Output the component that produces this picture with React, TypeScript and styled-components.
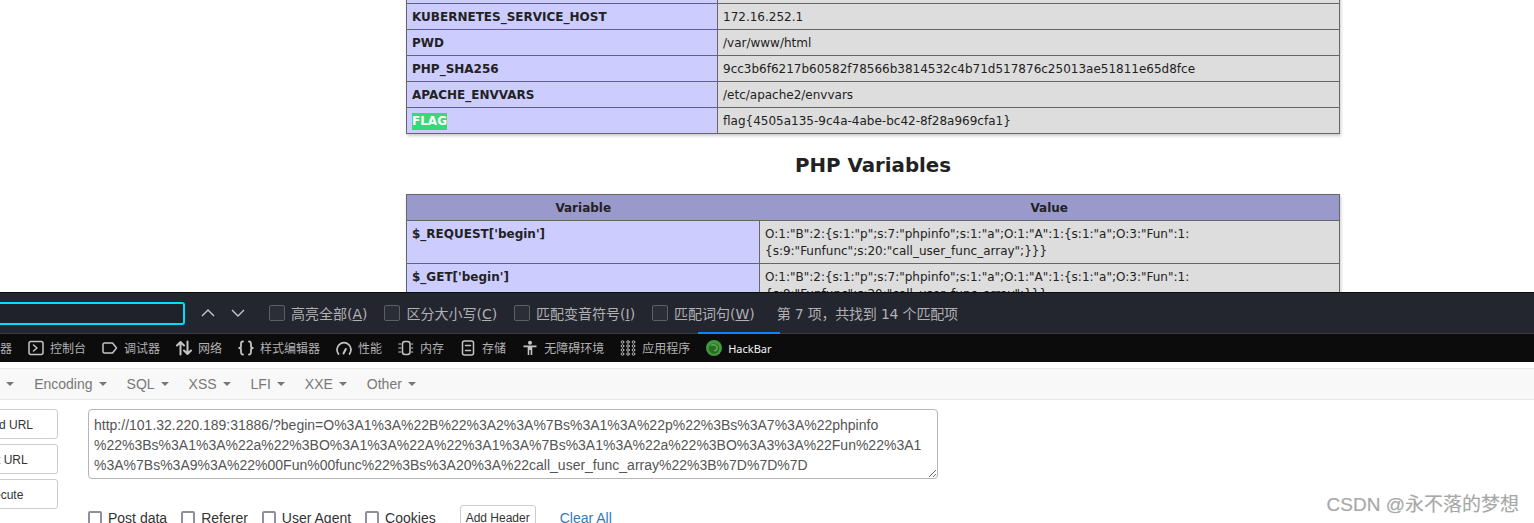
import React from "react";
import styled, { createGlobalStyle } from "styled-components";

const GlobalStyle = createGlobalStyle`
  html, body {
    margin: 0;
    padding: 0;
    background: #fff;
  }
`;

const Screen = styled.div`
  position: relative;
  width: 1534px;
  height: 523px;
  overflow: hidden;
  display: flex;
  flex-direction: column;
`;

/* scrolled phpinfo page */
const PagePane = styled.div`
  height: 292px;
  flex: none;
  overflow: hidden;
  padding-left: 406px;
  font-family: "DejaVu Sans", sans-serif;
  font-size: 12px;
  line-height: 17px;
  color: #222;
`;

const PageColumn = styled.div`
  width: 934px;
  margin-top: -23px;
`;

const InfoTable = styled.table`
  width: 934px;
  table-layout: fixed;
  border-collapse: collapse;
  box-shadow: 1px 2px 3px #ccc;
`;

const NameCell = styled.td<{ $width: number }>`
  width: ${(p) => p.$width}px;
  box-sizing: border-box;
  border: 1px solid #666;
  padding: 5px 5px 3px;
  background: #ccf;
  font-weight: bold;
  vertical-align: top;
`;

const ValueCell = styled.td`
  border: 1px solid #666;
  padding: 5px 5px 3px;
  background: #ddd;
  vertical-align: top;
`;

const HeadCell = styled.th<{ $width?: number }>`
  ${(p) => (p.$width ? `width: ${p.$width}px;` : "")}
  box-sizing: border-box;
  border-top: 1px solid #666;
  border-bottom: 1px solid #666;
  padding: 5px 5px 3px;
  background: #99c;
  font-weight: bold;
  text-align: center;
  &:first-child {
    border-left: 1px solid #666;
  }
  &:last-child {
    border-right: 1px solid #666;
  }
`;

const FoundMark = styled.span`
  display: inline-block;
  background: #38d878;
  color: #fff;
`;

const SectionTitle = styled.h2`
  margin: 18px 0 15px;
  font-size: 19.8px;
  line-height: 27px;
  font-weight: bold;
  text-align: center;
  color: #222;
`;

/* find bar */
const FindBar = styled.div`
  height: 40px;
  flex: none;
  display: flex;
  align-items: center;
  background: #23252f;
  border-top: 1px solid #0c0c0d;
  font-family: "DejaVu Sans", "Noto Sans CJK SC", sans-serif;
  font-size: 14px;
  color: #b1b1b3;
`;

const FindInput = styled.div`
  width: 200px;
  height: 23px;
  margin-left: -15px;
  margin-right: 15px;
  flex: none;
  box-sizing: border-box;
  border: 2px solid #00ddff;
  border-radius: 3px;
  background: #20222b;
`;

const ArrowButton = styled.button`
  width: 16px;
  height: 16px;
  margin-right: 14px;
  padding: 0;
  border: 0;
  background: none;
  color: #c8c8ca;
  display: flex;
`;

const FindOption = styled.label`
  display: flex;
  align-items: center;
  gap: 6px;
  margin-right: 16.9px;
  white-space: nowrap;
  &:first-of-type {
    margin-left: 9px;
  }
`;

const FindCheck = styled.input.attrs({ type: "checkbox" })`
  appearance: none;
  width: 16px;
  height: 16px;
  margin: 0;
  border: 1px solid #5d5f66;
  border-radius: 2px;
  background: #2b2d37;
`;

const MatchStatus = styled.span`
  margin-left: 5px;
  letter-spacing: -0.2px;
  white-space: nowrap;
`;

/* devtools tabs */
const TabBar = styled.div`
  height: 28px;
  flex: none;
  display: flex;
  background: #0c0c0d;
  border-top: 1px solid #3a3b40;
  font-family: "Noto Sans", "Noto Sans CJK SC", sans-serif;
  font-size: 12px;
  color: #b1b1b3;
`;

const Tab = styled.div<{ $active?: boolean }>`
  position: relative;
  display: flex;
  align-items: center;
  gap: 6px;
  padding: 0 8px;
  flex: none;
  white-space: nowrap;
  color: ${(p) => (p.$active ? "#f4f4f5" : "#b1b1b3")};
  font-size: ${(p) => (p.$active ? "11px" : "12px")};
  &:first-child {
    margin-left: -54px;
  }
  ${(p) =>
    p.$active
      ? `&::before {
    content: "";
    position: absolute;
    left: 0;
    right: 0;
    top: -2px;
    height: 2px;
    background: #0a84ff;
  }`
      : ""}
`;

const TabIcon = styled.svg`
  width: 16px;
  height: 16px;
  flex: none;
  fill: none;
  stroke: #c4c4c6;
  stroke-width: 1.5;
  stroke-linecap: round;
  stroke-linejoin: round;
`;

/* hackbar panel */
const HackBar = styled.div`
  flex: 1;
  background: #fff;
  padding-top: 6px;
  font-family: "Liberation Sans", Arial, sans-serif;
  font-size: 14px;
  color: #333;
`;

const MenuRow = styled.div`
  height: 30px;
  display: flex;
  align-items: center;
  background: #f8f8f8;
  border-top: 1px solid #e7e7e7;
  border-bottom: 1px solid #e7e7e7;
`;

const MenuItem = styled.div`
  display: flex;
  align-items: center;
  gap: 6px;
  padding: 0 10px;
  flex: none;
  color: #777;
  &:first-child {
    margin-left: -76px;
  }
`;

const Caret = styled.span`
  width: 0;
  height: 0;
  border-top: 4px solid #777;
  border-left: 4px solid transparent;
  border-right: 4px solid transparent;
`;

const WorkArea = styled.div`
  display: flex;
  gap: 30px;
  margin-left: -47px;
  padding-top: 9px;
`;

const ActionColumn = styled.div`
  width: 105px;
  flex: none;
  display: flex;
  flex-direction: column;
  gap: 5px;
`;

const ActionButton = styled.button<{ $indent: number }>`
  height: 30px;
  padding: 2px 0 0 ${(p) => p.$indent}px;
  text-align: left;
  background: #fff;
  border: 1px solid #ccc;
  border-radius: 3px;
  font-family: inherit;
  font-size: 12px;
  color: #333;
`;

const UrlColumn = styled.div`
  width: 850px;
  flex: none;
`;

const UrlBox = styled.textarea`
  display: block;
  width: 850px;
  height: 70px;
  box-sizing: border-box;
  padding: 5px;
  margin: 0;
  border: 1px solid #b5b5b5;
  border-radius: 4px;
  outline: none;
  overflow: hidden;
  font-family: inherit;
  font-size: 14px;
  line-height: 20px;
  color: #555;
  white-space: pre;
`;

const OptionRow = styled.div`
  display: flex;
  align-items: center;
  margin-top: 26px;
  height: 26px;
`;

const Option = styled.label`
  display: flex;
  align-items: center;
  gap: 6px;
  margin-right: 14px;
  white-space: nowrap;
`;

const OptionCheck = styled.input.attrs({ type: "checkbox" })`
  appearance: none;
  width: 14px;
  height: 14px;
  margin: 0;
  border: 2px solid #8f8f9d;
  border-radius: 2px;
  background: #fff;
`;

const SmallButton = styled.button`
  width: 76px;
  height: 26px;
  margin-left: 10px;
  margin-right: 24px;
  padding: 0;
  background: #fff;
  border: 1px solid #ccc;
  border-radius: 3px;
  font-family: inherit;
  font-size: 12px;
  color: #333;
`;

const ClearLink = styled.a`
  color: #337ab7;
  text-decoration: none;
`;

const Watermark = styled.div`
  position: absolute;
  right: 15px;
  top: 492px;
  font-family: "Liberation Sans", "Noto Sans CJK SC", sans-serif;
  font-size: 19px;
  line-height: 26px;
  color: #a8a8a8;
  text-shadow: 0 0 1px #ddd;
  white-space: nowrap;
`;

const envRows: [string, React.ReactNode][] = [
  ["KUBERNETES_SERVICE_PORT", "443"],
  ["KUBERNETES_SERVICE_HOST", "172.16.252.1"],
  ["PWD", "/var/www/html"],
  ["PHP_SHA256", "9cc3b6f6217b60582f78566b3814532c4b71d517876c25013ae51811e65d8fce"],
  ["APACHE_ENVVARS", "/etc/apache2/envvars"],
  ["FLAG", "flag{4505a135-9c4a-4abe-bc42-8f28a969cfa1}"],
];

const payloadA = 'O:1:"B":2:{s:1:"p";s:7:"phpinfo";s:1:"a";O:1:"A":1:{s:1:"a";O:3:"Fun":1:';
const payloadB = '{s:9:"Funfunc";s:20:"call_user_func_array";}}}';

const urlText = [
  "http://101.32.220.189:31886/?begin=O%3A1%3A%22B%22%3A2%3A%7Bs%3A1%3A%22p%22%3Bs%3A7%3A%22phpinfo",
  "%22%3Bs%3A1%3A%22a%22%3BO%3A1%3A%22A%22%3A1%3A%7Bs%3A1%3A%22a%22%3BO%3A3%3A%22Fun%22%3A1",
  "%3A%7Bs%3A9%3A%22%00Fun%00func%22%3Bs%3A20%3A%22call_user_func_array%22%3B%7D%7D%7D",
].join("\n");

const findOptions: [string, string][] = [
  ["高亮全部", "A"],
  ["区分大小写", "C"],
  ["匹配变音符号", "I"],
  ["匹配词句", "W"],
];

const tabs: [string, React.ReactNode][] = [
  ["查看器", <rect key="i" x="2" y="2" width="12" height="12" rx="2" />],
  [
    "控制台",
    <>
      <rect x="1" y="1.5" width="14" height="13" rx="2" />
      <path d="M5.5 5l3.5 3-3.5 3" />
    </>,
  ],
  ["调试器", <path key="d" d="M2.5 3h8l4 5-4 5h-8a1.5 1.5 0 0 1-1.5-1.5v-7A1.5 1.5 0 0 1 2.5 3z" />],
  [
    "网络",
    <path key="n" strokeWidth="2" d="M4.5 14.5V2M1 5.5L4.5 2 8 5.5M11.5 1.500V14M8 10.500l3.500 3.500 3.500-3.500" />,
  ],
  [
    "样式编辑器",
    <path
      key="s"
      strokeWidth="1.800"
      d="M5 1.500C3 1.500 3 2.500 3 4.500v1.500C3 7.200 2.300 8 1.200 8 2.300 8 3 8.800 3 10v1.500c0 2 0 3 2 3M11 1.500c2 0 2 1 2 3v1.500c0 1.200.7 2 1.800 2-1.100 0-1.800.8-1.800 2v1.500c0 2 0 3-2 3"
    />,
  ],
  [
    "性能",
    <>
      <path d="M2.500 14A7 7 0 1 1 13.500 14" strokeWidth="1.700" />
      <path d="M7.500 13.500L9.800 9" strokeWidth="2" />
    </>,
  ],
  [
    "内存",
    <>
      <rect x="4.500" y="1.500" width="7.500" height="13" rx="2.500" />
      <path d="M0.800 4H3M0.800 8H3M0.800 12H3M13.500 4h1.200M13.500 8h1.200M13.500 12h1.200" strokeWidth="1.200" />
    </>,
  ],
  [
    "存储",
    <>
      <rect x="2.500" y="1" width="11" height="14" rx="2" />
      <path d="M5.500 5.500h5M5.500 10.500h5" />
    </>,
  ],
  [
    "无障碍环境",
    <>
      <circle cx="8" cy="2.800" r="2" fill="#c4c4c6" stroke="none" />
      <path
        d="M1.500 5.500h13v1.800H10.300V15H8.700v-5H7.300v5H5.700V7.300H1.500z"
        fill="#c4c4c6"
        stroke="none"
      />
    </>,
  ],
  [
    "应用程序",
    <g key="a" strokeWidth="0.9">
      {[0, 1, 2].map((c) =>
        [0, 1, 2, 3].map((r) => <circle key={`${c}-${r}`} cx={2.500 + c * 5.500} cy={2 + r * 4} r="1.300" />)
      )}
    </g>,
  ],
];

const menus = ["Encryption", "Encoding", "SQL", "XSS", "LFI", "XXE", "Other"];

const App: React.FC = () => {
  return (
    <Screen>
      <GlobalStyle />
      <PagePane>
        <PageColumn>
          <InfoTable>
            <tbody>
              {envRows.map(([name, value]) => (
                <tr key={name}>
                  <NameCell $width={311}>{name === "FLAG" ? <FoundMark>{name}</FoundMark> : name}</NameCell>
                  <ValueCell>{value}</ValueCell>
                </tr>
              ))}
            </tbody>
          </InfoTable>
          <SectionTitle>PHP Variables</SectionTitle>
          <InfoTable>
            <tbody>
              <tr>
                <HeadCell $width={353}>Variable</HeadCell>
                <HeadCell>Value</HeadCell>
              </tr>
              {["$_REQUEST['begin']", "$_GET['begin']"].map((name) => (
                <tr key={name}>
                  <NameCell $width={353}>{name}</NameCell>
                  <ValueCell>
                    {payloadA}
                    <br />
                    {payloadB}
                  </ValueCell>
                </tr>
              ))}
            </tbody>
          </InfoTable>
        </PageColumn>
      </PagePane>

      <FindBar>
        <FindInput />
        <ArrowButton>
          <svg width="16" height="16" viewBox="0 0 16 16" fill="none" stroke="currentColor" strokeWidth="1.400">
            <path d="M2 11l6-6 6 6" />
          </svg>
        </ArrowButton>
        <ArrowButton>
          <svg width="16" height="16" viewBox="0 0 16 16" fill="none" stroke="currentColor" strokeWidth="1.400">
            <path d="M2 5l6 6 6-6" />
          </svg>
        </ArrowButton>
        {findOptions.map(([label, key]) => (
          <FindOption key={key}>
            <FindCheck />
            <span>
              {label}(<u>{key}</u>)
            </span>
          </FindOption>
        ))}
        <MatchStatus>第 7 项，共找到 14 个匹配项</MatchStatus>
      </FindBar>

      <TabBar>
        {tabs.map(([label, icon]) => (
          <Tab key={label}>
            <TabIcon viewBox="0 0 16 16">{icon}</TabIcon>
            {label}
          </Tab>
        ))}
        <Tab $active>
          <svg width="16" height="16" viewBox="0 0 16 16">
            <circle cx="8" cy="8" r="8" fill="#3f9a3c" />
            <circle cx="8" cy="8.500" r="5.200" fill="#2a6b28" />
            <path d="M5 5.500a4 4 0 0 1 6 1.500c.6 2-1 4-3 3.500" fill="none" stroke="#58b04f" strokeWidth="1.500" />
          </svg>
          HackBar
        </Tab>
      </TabBar>

      <HackBar>
        <MenuRow>
          {menus.map((m) => (
            <MenuItem key={m}>
              {m}
              <Caret />
            </MenuItem>
          ))}
        </MenuRow>
        <WorkArea>
          <ActionColumn>
            <ActionButton $indent={25}>Load URL</ActionButton>
            <ActionButton $indent={23}>Split URL</ActionButton>
            <ActionButton $indent={26}>Execute</ActionButton>
          </ActionColumn>
          <UrlColumn>
            <UrlBox readOnly defaultValue={urlText} />
            <OptionRow>
              <Option>
                <OptionCheck />
                Post data
              </Option>
              <Option>
                <OptionCheck />
                Referer
              </Option>
              <Option>
                <OptionCheck />
                User Agent
              </Option>
              <Option>
                <OptionCheck />
                Cookies
              </Option>
              <SmallButton>Add Header</SmallButton>
              <ClearLink href="#">Clear All</ClearLink>
            </OptionRow>
          </UrlColumn>
        </WorkArea>
      </HackBar>

      <Watermark>CSDN @永不落的梦想</Watermark>
    </Screen>
  );
};

export default App;
